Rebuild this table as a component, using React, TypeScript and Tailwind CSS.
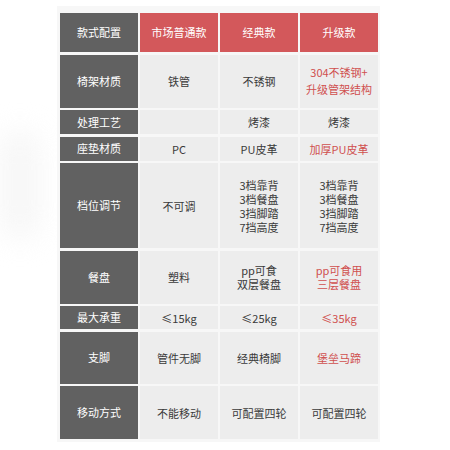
import React from "react";

type Cell = { t: string[]; red?: boolean; lh?: string };

const rows: { label: string; h: string; cells: Cell[] }[] = [
  { label: "椅架材质", h: "h-[53px]", cells: [{ t: ["铁管"] }, { t: ["不锈钢"] }, { t: ["304不锈钢+", "升级管架结构"], red: true, lh: "leading-[17px]" }] },
  { label: "处理工艺", h: "h-[24px]", cells: [{ t: [""] }, { t: ["烤漆"] }, { t: ["烤漆"] }] },
  { label: "座垫材质", h: "h-[24px]", cells: [{ t: ["PC"] }, { t: ["PU皮革"] }, { t: ["加厚PU皮革"], red: true }] },
  { label: "档位调节", h: "h-[85px]", cells: [{ t: ["不可调"] }, { t: ["3档靠背", "3档餐盘", "3挡脚踏", "7挡高度"] }, { t: ["3档靠背", "3档餐盘", "3挡脚踏", "7挡高度"] }] },
  { label: "餐盘", h: "h-[53px]", cells: [{ t: ["塑料"] }, { t: ["pp可食", "双层餐盘"] }, { t: ["pp可食用", "三层餐盘"], red: true }] },
  { label: "最大承重", h: "h-[23px]", cells: [{ t: ["≤15kg"] }, { t: ["≤25kg"] }, { t: ["≤35kg"], red: true }] },
  { label: "支脚", h: "h-[52px]", cells: [{ t: ["管件无脚"] }, { t: ["经典椅脚"] }, { t: ["堡垒马蹄"], red: true }] },
  { label: "移动方式", h: "h-[53px]", cells: [{ t: ["不能移动"] }, { t: ["可配置四轮"] }, { t: ["可配置四轮"] }] },
];

export default function App() {
  return (
    <div
      className="w-[450px] h-[450px] bg-white overflow-hidden relative"
      style={{ fontFamily: '"Noto Sans CJK SC", "Noto Sans", sans-serif' }}
    >
      <div className="absolute left-0 top-[130px] w-[40px] h-[110px] rounded-full bg-[#f3f3f3] blur-[14px] opacity-70" />
      <div className="relative ml-[57px] mt-[6px] w-[323px] bg-[#f7f7f7] pl-[3px] pt-[7px] pr-[2px] pb-[3px]">
        <div className="grid grid-cols-[78px_78px_78px_78px] gap-x-[2px] gap-y-[2.5px] text-[11px]">
          <div className="h-[39px] bg-[#616161] text-white flex items-center justify-center">款式配置</div>
          <div className="h-[39px] bg-[#d3585b] text-white flex items-center justify-center">市场普通款</div>
          <div className="h-[39px] bg-[#d3585b] text-white flex items-center justify-center">经典款</div>
          <div className="h-[39px] bg-[#d3585b] text-white flex items-center justify-center">升级款</div>
          {rows.map((r) => (
            <React.Fragment key={r.label}>
              <div className={`${r.h} bg-[#616161] text-white flex items-center justify-center`}>{r.label}</div>
              {r.cells.map((c, i) => (
                <div
                  key={i}
                  className={`${r.h} bg-[#ededed] flex flex-col items-center justify-center text-center ${c.lh ?? "leading-[14px]"} ${c.red ? "text-[#d0504f]" : "text-[#3a3a3a]"}`}
                >
                  {c.t.map((l, j) => (
                    <span key={j}>{l}</span>
                  ))}
                </div>
              ))}
            </React.Fragment>
          ))}
        </div>
      </div>
    </div>
  );
}
